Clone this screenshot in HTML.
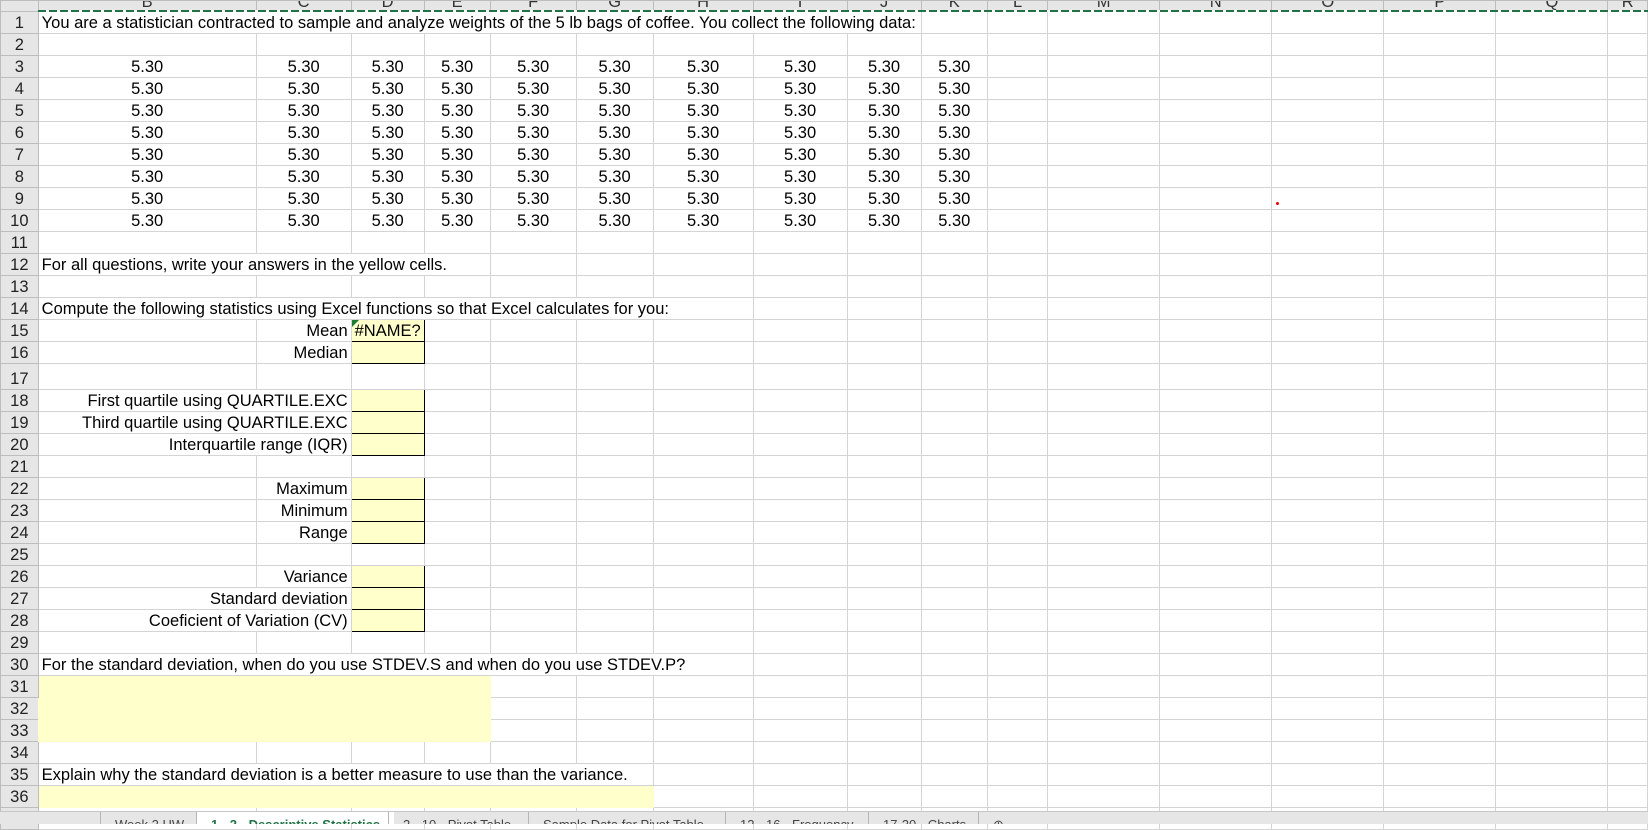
<!DOCTYPE html>
<html><head><meta charset="utf-8">
<style>
html,body{margin:0;padding:0;width:1648px;height:823px;overflow:hidden;background:#fff}
table{border-collapse:collapse;table-layout:fixed;font-family:"Liberation Sans",Arial,sans-serif;font-size:16.5px;color:#000;position:absolute;left:0;top:0}
td{border:1px solid #d4d4d4;padding:0 3px;white-space:nowrap;overflow:visible;vertical-align:bottom;height:21px;line-height:19px}
th{background:#e6e6e6;border:1px solid #bdbdbd;font-weight:normal;color:#222;font-size:16.5px;text-align:center;padding:0;vertical-align:bottom;line-height:19px;height:21px;font-family:"Liberation Sans",Arial,sans-serif}
tr.h th{height:10px;line-height:10px;overflow:hidden;vertical-align:bottom;border-bottom:1px solid #bdbdbd}
tr.h th div{height:10px;overflow:hidden;position:relative}
tr.h th div span{position:absolute;left:0;right:0;top:-4px;line-height:10px;color:#333}
.n td:nth-child(-n+11){text-align:center}
.r{text-align:right}
.y{background:#ffffcc;border:1px solid #000}
.yy{background:#ffffcc;border-color:#ffffcc}
tr.t td,tr.t th{height:25px}
.marq{position:absolute;left:38px;top:10px;width:1610px;height:2px;background:repeating-linear-gradient(90deg,#217346 0 8px,#fff 8px 11px)}
.tabs{position:absolute;left:0;top:811px;width:1648px;height:12px;background:#e6e6e6;border-top:1px solid #c6c6c6;font-family:"Liberation Sans",Arial,sans-serif;font-size:13px;color:#444;overflow:hidden}
.tab{position:absolute;top:0;height:14px;border-left:1px solid #b5b5b5;padding:5px 14px;white-space:nowrap}
.act{background:#fff;color:#217346;font-weight:bold}
</style></head><body>
<table>
<colgroup><col style="width:38px"><col style="width:218px"><col style="width:95px"><col style="width:72px"><col style="width:66px"><col style="width:86px"><col style="width:77px"><col style="width:100px"><col style="width:94px"><col style="width:74px"><col style="width:67px"><col style="width:61px"><col style="width:114px"><col style="width:114px"><col style="width:114px"><col style="width:114px"><col style="width:114px"><col style="width:40px"></colgroup>
<tr class="h"><th><div></div></th><th><div><span>B</span></div></th><th><div><span>C</span></div></th><th><div><span>D</span></div></th><th><div><span>E</span></div></th><th><div><span>F</span></div></th><th><div><span>G</span></div></th><th><div><span>H</span></div></th><th><div><span>I</span></div></th><th><div><span>J</span></div></th><th><div><span>K</span></div></th><th><div><span>L</span></div></th><th><div><span>M</span></div></th><th><div><span>N</span></div></th><th><div><span>O</span></div></th><th><div><span>P</span></div></th><th><div><span>Q</span></div></th><th><div><span>R</span></div></th></tr>
<tr><th>1</th><td colspan="9">You are a statistician contracted to sample and analyze weights of the 5 lb bags of coffee. You collect the following data:</td><td></td><td></td><td></td><td></td><td></td><td></td><td></td><td></td></tr>
<tr><th>2</th><td></td><td></td><td></td><td></td><td></td><td></td><td></td><td></td><td></td><td></td><td></td><td></td><td></td><td></td><td></td><td></td><td></td></tr>
<tr class="n"><th>3</th><td>5.30</td><td>5.30</td><td>5.30</td><td>5.30</td><td>5.30</td><td>5.30</td><td>5.30</td><td>5.30</td><td>5.30</td><td>5.30</td><td></td><td></td><td></td><td></td><td></td><td></td><td></td></tr>
<tr class="n"><th>4</th><td>5.30</td><td>5.30</td><td>5.30</td><td>5.30</td><td>5.30</td><td>5.30</td><td>5.30</td><td>5.30</td><td>5.30</td><td>5.30</td><td></td><td></td><td></td><td></td><td></td><td></td><td></td></tr>
<tr class="n"><th>5</th><td>5.30</td><td>5.30</td><td>5.30</td><td>5.30</td><td>5.30</td><td>5.30</td><td>5.30</td><td>5.30</td><td>5.30</td><td>5.30</td><td></td><td></td><td></td><td></td><td></td><td></td><td></td></tr>
<tr class="n"><th>6</th><td>5.30</td><td>5.30</td><td>5.30</td><td>5.30</td><td>5.30</td><td>5.30</td><td>5.30</td><td>5.30</td><td>5.30</td><td>5.30</td><td></td><td></td><td></td><td></td><td></td><td></td><td></td></tr>
<tr class="n"><th>7</th><td>5.30</td><td>5.30</td><td>5.30</td><td>5.30</td><td>5.30</td><td>5.30</td><td>5.30</td><td>5.30</td><td>5.30</td><td>5.30</td><td></td><td></td><td></td><td></td><td></td><td></td><td></td></tr>
<tr class="n"><th>8</th><td>5.30</td><td>5.30</td><td>5.30</td><td>5.30</td><td>5.30</td><td>5.30</td><td>5.30</td><td>5.30</td><td>5.30</td><td>5.30</td><td></td><td></td><td></td><td></td><td></td><td></td><td></td></tr>
<tr class="n"><th>9</th><td>5.30</td><td>5.30</td><td>5.30</td><td>5.30</td><td>5.30</td><td>5.30</td><td>5.30</td><td>5.30</td><td>5.30</td><td>5.30</td><td></td><td></td><td></td><td></td><td></td><td></td><td></td></tr>
<tr class="n"><th>10</th><td>5.30</td><td>5.30</td><td>5.30</td><td>5.30</td><td>5.30</td><td>5.30</td><td>5.30</td><td>5.30</td><td>5.30</td><td>5.30</td><td></td><td></td><td></td><td></td><td></td><td></td><td></td></tr>
<tr><th>11</th><td></td><td></td><td></td><td></td><td></td><td></td><td></td><td></td><td></td><td></td><td></td><td></td><td></td><td></td><td></td><td></td><td></td></tr>
<tr><th>12</th><td colspan="4">For all questions, write your answers in the yellow cells.</td><td></td><td></td><td></td><td></td><td></td><td></td><td></td><td></td><td></td><td></td><td></td><td></td><td></td></tr>
<tr><th>13</th><td></td><td></td><td></td><td></td><td></td><td></td><td></td><td></td><td></td><td></td><td></td><td></td><td></td><td></td><td></td><td></td><td></td></tr>
<tr><th>14</th><td colspan="7">Compute the following statistics using Excel functions so that Excel calculates for you:</td><td></td><td></td><td></td><td></td><td></td><td></td><td></td><td></td><td></td><td></td></tr>
<tr><th>15</th><td></td><td class="r">Mean</td><td class="y" style="position:relative">#NAME?<div style="position:absolute;left:0;top:0;width:0;height:0;border-top:7px solid #1e7b34;border-right:7px solid transparent"></div></td><td></td><td></td><td></td><td></td><td></td><td></td><td></td><td></td><td></td><td></td><td></td><td></td><td></td><td></td></tr>
<tr><th>16</th><td></td><td class="r">Median</td><td class="y"></td><td></td><td></td><td></td><td></td><td></td><td></td><td></td><td></td><td></td><td></td><td></td><td></td><td></td><td></td></tr>
<tr class="t"><th>17</th><td></td><td></td><td></td><td></td><td></td><td></td><td></td><td></td><td></td><td></td><td></td><td></td><td></td><td></td><td></td><td></td><td></td></tr>
<tr><th>18</th><td colspan="2" class="r">First quartile using QUARTILE.EXC</td><td class="y"></td><td></td><td></td><td></td><td></td><td></td><td></td><td></td><td></td><td></td><td></td><td></td><td></td><td></td><td></td></tr>
<tr><th>19</th><td colspan="2" class="r">Third quartile using QUARTILE.EXC</td><td class="y"></td><td></td><td></td><td></td><td></td><td></td><td></td><td></td><td></td><td></td><td></td><td></td><td></td><td></td><td></td></tr>
<tr><th>20</th><td colspan="2" class="r">Interquartile range (IQR)</td><td class="y"></td><td></td><td></td><td></td><td></td><td></td><td></td><td></td><td></td><td></td><td></td><td></td><td></td><td></td><td></td></tr>
<tr><th>21</th><td></td><td></td><td></td><td></td><td></td><td></td><td></td><td></td><td></td><td></td><td></td><td></td><td></td><td></td><td></td><td></td><td></td></tr>
<tr><th>22</th><td></td><td class="r">Maximum</td><td class="y"></td><td></td><td></td><td></td><td></td><td></td><td></td><td></td><td></td><td></td><td></td><td></td><td></td><td></td><td></td></tr>
<tr><th>23</th><td></td><td class="r">Minimum</td><td class="y"></td><td></td><td></td><td></td><td></td><td></td><td></td><td></td><td></td><td></td><td></td><td></td><td></td><td></td><td></td></tr>
<tr><th>24</th><td></td><td class="r">Range</td><td class="y"></td><td></td><td></td><td></td><td></td><td></td><td></td><td></td><td></td><td></td><td></td><td></td><td></td><td></td><td></td></tr>
<tr><th>25</th><td></td><td></td><td></td><td></td><td></td><td></td><td></td><td></td><td></td><td></td><td></td><td></td><td></td><td></td><td></td><td></td><td></td></tr>
<tr><th>26</th><td></td><td class="r">Variance</td><td class="y"></td><td></td><td></td><td></td><td></td><td></td><td></td><td></td><td></td><td></td><td></td><td></td><td></td><td></td><td></td></tr>
<tr><th>27</th><td colspan="2" class="r">Standard deviation</td><td class="y"></td><td></td><td></td><td></td><td></td><td></td><td></td><td></td><td></td><td></td><td></td><td></td><td></td><td></td><td></td></tr>
<tr><th>28</th><td colspan="2" class="r">Coeficient of Variation (CV)</td><td class="y"></td><td></td><td></td><td></td><td></td><td></td><td></td><td></td><td></td><td></td><td></td><td></td><td></td><td></td><td></td></tr>
<tr><th>29</th><td></td><td></td><td></td><td></td><td></td><td></td><td></td><td></td><td></td><td></td><td></td><td></td><td></td><td></td><td></td><td></td><td></td></tr>
<tr><th>30</th><td colspan="7">For the standard deviation, when do you use STDEV.S and when do you use STDEV.P?</td><td></td><td></td><td></td><td></td><td></td><td></td><td></td><td></td><td></td><td></td></tr>
<tr><th>31</th><td colspan="4" rowspan="3" class="yy"></td><td></td><td></td><td></td><td></td><td></td><td></td><td></td><td></td><td></td><td></td><td></td><td></td><td></td></tr>
<tr><th>32</th><td></td><td></td><td></td><td></td><td></td><td></td><td></td><td></td><td></td><td></td><td></td><td></td><td></td></tr>
<tr><th>33</th><td></td><td></td><td></td><td></td><td></td><td></td><td></td><td></td><td></td><td></td><td></td><td></td><td></td></tr>
<tr><th>34</th><td></td><td></td><td></td><td></td><td></td><td></td><td></td><td></td><td></td><td></td><td></td><td></td><td></td><td></td><td></td><td></td><td></td></tr>
<tr><th>35</th><td colspan="6">Explain why the standard deviation is a better measure to use than the variance.</td><td></td><td></td><td></td><td></td><td></td><td></td><td></td><td></td><td></td><td></td><td></td></tr>
<tr><th>36</th><td colspan="6" class="yy"></td><td></td><td></td><td></td><td></td><td></td><td></td><td></td><td></td><td></td><td></td><td></td></tr>
<tr><th>37</th><td></td><td></td><td></td><td></td><td></td><td></td><td></td><td></td><td></td><td></td><td></td><td></td><td></td><td></td><td></td><td></td><td></td></tr>
</table>
<div class="marq"></div>
<div style="position:absolute;left:1276px;top:202px;width:3px;height:3px;border-radius:50%;background:#e00"></div>
<div class="tabs">
<div class="tab" style="left:100px">Week 2 HW</div>
<div class="tab act" style="left:196px">1 - 2 - Descriptive Statistics</div>
<div class="tab" style="left:388px">2 - 10 - Pivot Table</div>
<div class="tab" style="left:528px">Sample Data for Pivot Table</div>
<div class="tab" style="left:725px">12 - 16 - Frequency</div>
<div class="tab" style="left:868px">17-20 - Charts</div>
<div class="tab" style="left:978px">⊕</div>
</div>
</body></html>
